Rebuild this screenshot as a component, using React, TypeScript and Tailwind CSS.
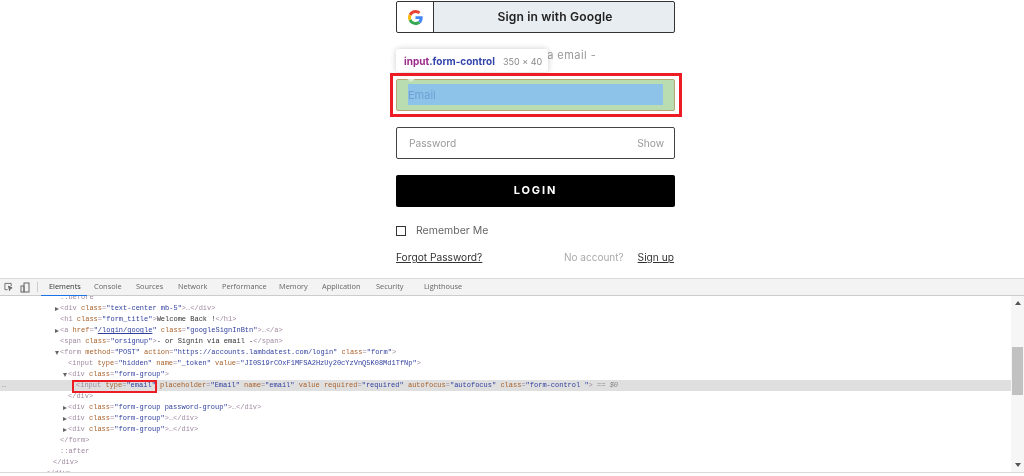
import React from "react";

const T = ({ c }: { c: string }) => <span className="text-[#a08aa0]">{c}</span>;
const A = ({ c }: { c: string }) => <span className="text-[#a9622c]">{c}</span>;
const V = ({ c }: { c: string }) => <span className="text-[#2f3f9e]">{c}</span>;
const Arrow = ({ open }: { open?: boolean }) => (
  <span className={`absolute left-[-5px] top-[3px] w-0 h-0 ${open ? "border-l-[2.5px] border-r-[2.5px] border-t-[4px] border-l-transparent border-r-transparent border-t-[#666]" : "border-t-[2.5px] border-b-[2.5px] border-l-[4px] border-t-transparent border-b-transparent border-l-[#666]"}`} />
);

const Row = ({ indent, arrow, children, hl }: { indent: number; arrow?: "open" | "closed"; children: React.ReactNode; hl?: boolean }) => (
  <div className={`h-[11px] leading-[11px] whitespace-nowrap ${hl ? "bg-[#dfdfdf]" : ""}`} style={{ paddingLeft: indent }}>
    <span className="relative">
      {arrow && <Arrow open={arrow === "open"} />}
      {children}
    </span>
  </div>
);

const tabs = [
  ["Elements", "w-[30px] mr-[15px]"],
  ["Console", "w-[27px] mr-[15px]"],
  ["Sources", "w-[26px] mr-[16px]"],
  ["Network", "w-[28px] mr-[16px]"],
  ["Performance", "w-[42px] mr-[15px]"],
  ["Memory", "w-[28px] mr-[15px]"],
  ["Application", "w-[39px] mr-[15px]"],
  ["Security", "w-[26px] mr-[22px]"],
  ["Lighthouse", "w-[37px]"],
];

export default function App() {
  return (
    <div className="w-[1024px] h-[476px] bg-white overflow-hidden relative font-['Inter',sans-serif] blur-[0.35px]">
      <div className="h-[277px] pl-[396px]">
        <div className="w-[279px] relative">
          <div className="h-[32px] mt-px flex border border-[#333] rounded-[2px] bg-[#e8edf1]">
            <div className="w-[37px] bg-white border-r border-[#333] flex items-center justify-center rounded-l-[2px]">
              <svg width="15" height="15" viewBox="0 0 48 48">
                <path fill="#EA4335" d="M24 9.5c3.54 0 6.71 1.22 9.21 3.6l6.85-6.85C35.9 2.38 30.47 0 24 0 14.62 0 6.51 5.38 2.56 13.22l7.98 6.19C12.43 13.72 17.74 9.5 24 9.5z" />
                <path fill="#4285F4" d="M46.98 24.55c0-1.57-.15-3.09-.38-4.55H24v9.02h12.94c-.58 2.96-2.26 5.48-4.78 7.18l7.73 6c4.51-4.18 7.09-10.36 7.09-17.65z" />
                <path fill="#FBBC05" d="M10.53 28.59c-.48-1.45-.76-2.99-.76-4.59s.27-3.14.76-4.59l-7.98-6.19C.92 16.46 0 20.12 0 24c0 3.88.92 7.54 2.56 10.78l7.97-6.19z" />
                <path fill="#34A853" d="M24 48c6.48 0 11.93-2.13 15.89-5.81l-7.73-6c-2.15 1.45-4.92 2.3-8.16 2.3-6.26 0-11.57-4.22-13.47-9.91l-7.98 6.19C6.51 42.62 14.62 48 24 48z" />
              </svg>
            </div>
            <div className="flex-1 flex items-center justify-center pl-[2px] text-[12.1px] font-semibold text-[#222] tracking-[0.15px]">Sign in with Google</div>
          </div>
          <div className="h-[46px] flex items-center justify-center pb-[1px] text-[11px] text-[#999] tracking-[0.45px]">- or Signin via email -</div>
          <div className="h-[32px] bg-[#b9dcb0] border border-[#b7a574] rounded-[2px] py-[4px] px-[11px]">
            <div className="h-[21px] bg-[#8dc3e8] text-[11px] leading-[21px] pt-px text-[#6f9fd6]">Email</div>
          </div>
          <div className="h-[32px] mt-[16px] border border-[#444] rounded-[2px] flex items-center justify-between pl-[12px] pr-[10px] pt-[2px] text-[10.2px] text-[#999]">
            <span>Password</span>
            <span>Show</span>
          </div>
          <div className="h-[32px] mt-[16px] pb-[2px] bg-black rounded-[2px] flex items-center justify-center text-white text-[11px] font-bold tracking-[1.9px]">LOGIN</div>
          <div className="h-[10px] mt-[19px] flex items-center">
            <span className="w-[10px] h-[10px] border border-[#333]" />
            <span className="ml-[10px] text-[10.5px] text-[#666]">Remember Me</span>
          </div>
          <div className="mt-[14px] flex pr-px text-[10.2px] leading-[14px]">
            <span className="underline text-[#333]">Forgot Password?</span>
            <span className="ml-auto text-[#aaa] text-[10px]">No account?</span>
            <span className="ml-[14px] underline text-[#333]">Sign up</span>
          </div>

          <div className="absolute left-0 top-[48px] w-[152px] h-[23px] pt-[2px] bg-white rounded-[3px] shadow-[0_0_6px_rgba(0,0,0,0.2)] flex items-center pl-[8px] text-[10px] whitespace-nowrap">
            <span className="font-bold text-[#9c2a88]">input</span>
            <span className="font-bold text-[#3344aa]">.form-control</span>
            <span className="ml-[8px] text-[#888] text-[9px]">350 × 40</span>
          </div>
          <span className="absolute left-[11px] top-[78px] w-0 h-0 border-l-[4px] border-r-[4px] border-t-[3px] border-l-transparent border-r-transparent border-t-[#d8ead2]" />
          <div className="absolute left-[-6px] top-[72px] w-[292px] h-[44px] border-[3px] border-[#ed1c24]" />
        </div>
      </div>

      <div className="h-[195px] border-t border-[#d9d9d9] border-b flex flex-col">
        <div className="h-[17px] bg-[#f3f3f3] border-b border-[#ccc] flex items-center relative z-10">
          <div className="pl-[4px] w-[41px] flex items-center gap-[7px]">
            <svg width="9" height="10" viewBox="0 0 10 10" fill="none" stroke="#666" strokeWidth="1">
              <path d="M8 4V1H1v7h3" />
              <path d="M5 4l4 2-2 .8L6.2 9z" fill="#666" />
            </svg>
            <svg width="10" height="11" viewBox="0 0 10 11" fill="none" stroke="#666" strokeWidth="1">
              <rect x="4" y="1" width="5" height="9" />
              <rect x="1" y="4" width="3" height="6" />
            </svg>
          </div>
          <div className="absolute left-[37px] top-[3px] h-[10px] w-px bg-[#ccc]" />
          <div className="flex pl-[8px] font-['Open_Sans',sans-serif] text-[7.4px] text-[#666] whitespace-nowrap">
            {tabs.map(([t, c], i) => (
              <span key={t} className={`${c} ${i === 0 ? "text-[#333]" : ""}`}>{t}</span>
            ))}
          </div>
          <div className="absolute left-[41px] bottom-[-1px] w-[46px] h-[1px] bg-[#1a73e8]" />
        </div>
        <div className="flex-1 flex min-h-0">
          <div className="flex-1 overflow-hidden font-['Liberation_Mono',monospace] text-[7px] text-[#333]">
            <div className="-mt-[4px]">
            <Row indent={60}><span className="text-[#a08aa0]">::before</span></Row>
            <Row indent={60} arrow="closed"><T c="<div " /><A c="class" /><T c="=" /><V c={'"text-center mb-5"'} /><T c=">…</div>" /></Row>
            <Row indent={60}><T c="<h1 " /><A c="class" /><T c="=" /><V c={'"form_title"'} /><T c=">" /><span>Welcome Back !</span><T c="</h1>" /></Row>
            <Row indent={60} arrow="closed"><T c="<a " /><A c="href" /><T c="=" /><span className="text-[#2f3f9e]">"<span className="underline">/login/google</span>"</span> <A c="class" /><T c="=" /><V c={'"googleSignInBtn"'} /><T c=">…</a>" /></Row>
            <Row indent={60}><T c="<span " /><A c="class" /><T c="=" /><V c={'"orsignup"'} /><T c=">" /><span>- or Signin via email -</span><T c="</span>" /></Row>
            <Row indent={60} arrow="open"><T c="<form " /><A c="method" /><T c="=" /><V c={'"POST"'} /> <A c="action" /><T c="=" /><V c={'"https://accounts.lambdatest.com/login"'} /> <A c="class" /><T c="=" /><V c={'"form"'} /><T c=">" /></Row>
            <Row indent={68}><T c="<input " /><A c="type" /><T c="=" /><V c={'"hidden"'} /> <A c="name" /><T c="=" /><V c={'"_token"'} /> <A c="value" /><T c="=" /><V c={'"JI0S19rCOxF1MFSA2HzUy20cYzVnQ5K08Md1TfNp"'} /><T c=">" /></Row>
            <Row indent={68} arrow="open"><T c="<div " /><A c="class" /><T c="=" /><V c={'"form-group"'} /><T c=">" /></Row>
            <div className="relative">
              <span className="absolute left-[2px] top-0 leading-[11px] text-[#888]">…</span>
              <Row indent={76} hl><T c="<input " /><A c="type" /><T c="=" /><V c={'"email"'} /> <A c="placeholder" /><T c="=" /><V c={'"Email"'} /> <A c="name" /><T c="=" /><V c={'"email"'} /> <A c="value" /> <A c="required" /><T c="=" /><V c={'"required"'} /> <A c="autofocus" /><T c="=" /><V c={'"autofocus"'} /> <A c="class" /><T c="=" /><V c={'"form-control "'} /><T c=">" /> <span className="text-[#888]">== <i>$0</i></span></Row>
              <div className="absolute left-[72px] top-0 w-[85px] h-[13px] border-[2px] border-[#ed1c24]" />
            </div>
            <Row indent={68}><T c="</div>" /></Row>
            <Row indent={68} arrow="closed"><T c="<div " /><A c="class" /><T c="=" /><V c={'"form-group password-group"'} /><T c=">…</div>" /></Row>
            <Row indent={68} arrow="closed"><T c="<div " /><A c="class" /><T c="=" /><V c={'"form-group"'} /><T c=">…</div>" /></Row>
            <Row indent={68} arrow="closed"><T c="<div " /><A c="class" /><T c="=" /><V c={'"form-group"'} /><T c=">…</div>" /></Row>
            <Row indent={60}><T c="</form>" /></Row>
            <Row indent={60}><T c="::after" /></Row>
            <Row indent={53}><T c="</div>" /></Row>
            <Row indent={46}><T c="</div>" /></Row>
            </div>
          </div>
          <div className="w-[13px] bg-[#f6f6f6] flex flex-col items-center relative shrink-0">
            <span className="mt-[5px] w-0 h-0 border-l-[3px] border-r-[3px] border-b-[4px] border-l-transparent border-r-transparent border-b-[#555]" />
            <span className="mt-[42px] w-[11px] h-[48px] bg-[#c1c1c1]" />
            <span className="mt-auto mb-[5px] w-0 h-0 border-l-[3px] border-r-[3px] border-t-[4px] border-l-transparent border-r-transparent border-t-[#555]" />
          </div>
        </div>
      </div>
    </div>
  );
}
